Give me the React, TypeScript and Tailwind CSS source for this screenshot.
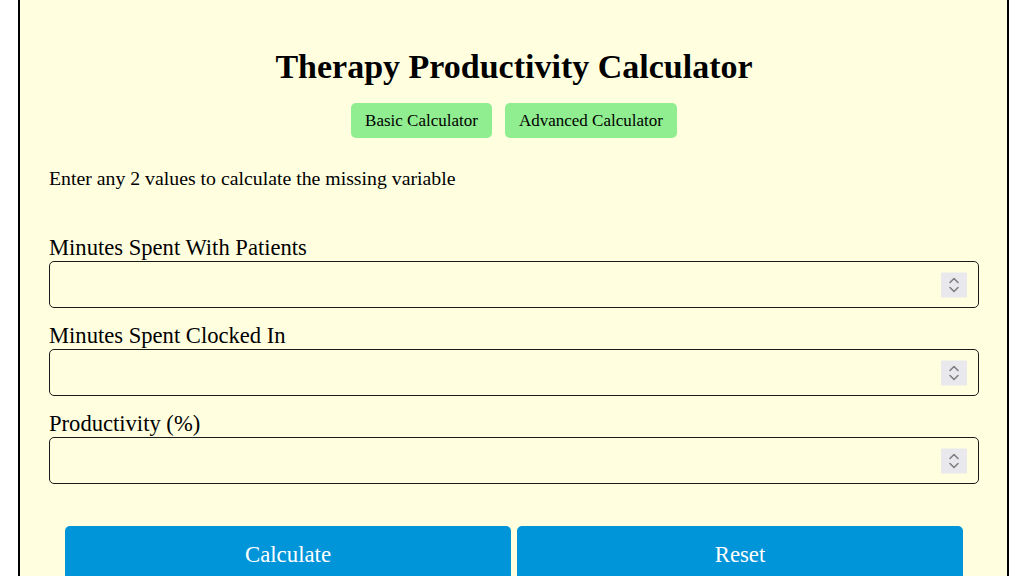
import React from 'react'

const serif = { fontFamily: '"Liberation Serif", "Times New Roman", serif' }

function Spinner() {
  return (
    <div className="absolute right-[12px] top-1/2 -translate-y-1/2 w-[26px] h-[25px] bg-[#e9e9ed] flex items-center justify-center">
      <svg width="14" height="19" viewBox="0 0 14 19" fill="none" stroke="#808080" strokeWidth="1.6" strokeLinecap="round" strokeLinejoin="round">
        <path d="M3 7 L7 3 L11 7" />
        <path d="M3 12 L7 16 L11 12" />
      </svg>
    </div>
  )
}

function Field({ label }: { label: string }) {
  return (
    <div className="flex flex-col">
      <label className="text-[22.6px] leading-[26px] text-black">{label}</label>
      <div className="relative">
        <input
          type="text"
          className="w-full h-[47px] border border-[#1a1a1a] rounded-[5px] bg-transparent px-2 outline-none"
        />
        <Spinner />
      </div>
    </div>
  )
}

export default function App() {
  return (
    <div className="min-h-screen bg-white overflow-hidden" style={serif}>
      <div className="ml-[18px] w-[991px] min-h-[600px] bg-[#ffffe0] border-x-2 border-black pl-[29px] pr-[28px] pt-[48px]">
        <h1 className="text-[34px] leading-[38px] font-bold text-center text-black">
          Therapy Productivity Calculator
        </h1>

        <div className="flex justify-center gap-[13px] mt-[17px]">
          <button className="h-[35px] px-[14px] bg-[#90ee90] rounded-[5px] text-[17px] text-black">
            Basic Calculator
          </button>
          <button className="h-[35px] px-[14px] bg-[#90ee90] rounded-[5px] text-[17px] text-black">
            Advanced Calculator
          </button>
        </div>

        <p className="text-[19.8px] leading-[22px] mt-[29px] text-black">
          Enter any 2 values to calculate the missing variable
        </p>

        <div className="flex flex-col gap-[15px] mt-[46px]">
          <Field label="Minutes Spent With Patients" />
          <Field label="Minutes Spent Clocked In" />
          <Field label="Productivity (%)" />
        </div>

        <div className="flex gap-[6px] px-4 mt-[42px]">
          <button className="flex-1 h-[58px] bg-[#0094d9] rounded-[5px] text-white text-[22.8px]">
            Calculate
          </button>
          <button className="flex-1 h-[58px] bg-[#0094d9] rounded-[5px] text-white text-[22.8px]">
            Reset
          </button>
        </div>
      </div>
    </div>
  )
}
